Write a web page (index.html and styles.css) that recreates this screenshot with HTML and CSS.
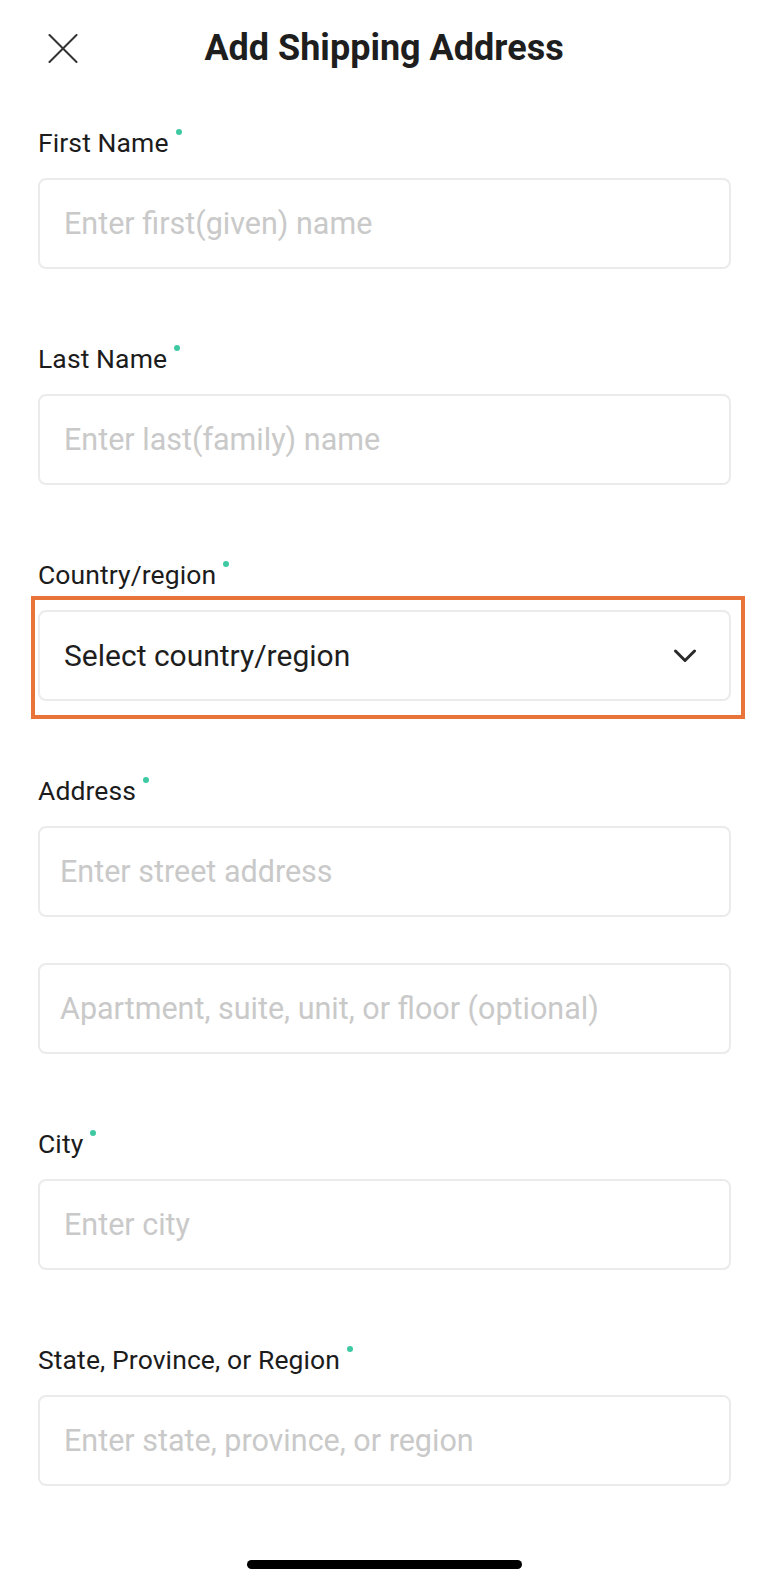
FILE: index.html
```html
<!DOCTYPE html>
<html lang="en">
<head>
  <meta charset="UTF-8" />
  <title>Add Shipping Address</title>
  <link rel="stylesheet" href="styles.css">
</head>
<body>
  <div class="screen">
    <header class="topbar">
      <button class="close-btn" aria-label="Close">
        <svg width="30" height="29" viewBox="0 0 30 29">
          <line x1="1.5" y1="1" x2="28.5" y2="28" stroke="#333" stroke-width="2" stroke-linecap="round" />
          <line x1="28.5" y1="1" x2="1.5" y2="28" stroke="#333" stroke-width="2" stroke-linecap="round" />
        </svg>
      </button>
      <h1 class="title">Add Shipping Address</h1>
      <span></span>
    </header>

    <form class="address-form">
      <div class="field">
        <div class="label required">First Name</div>
        <div class="input"><span class="placeholder">Enter first(given) name</span></div>
      </div>

      <div class="field">
        <div class="label required">Last Name</div>
        <div class="input"><span class="placeholder">Enter last(family) name</span></div>
      </div>

      <div class="field">
        <div class="label required">Country/region</div>
        <div class="select-wrap">
          <div class="input select">
            <span class="value">Select country/region</span>
            <svg class="chevron" width="24" height="14" viewBox="0 0 24 14">
              <polyline points="2.5,2 12,11.5 21.5,2" fill="none" stroke="#2a2a2a" stroke-width="3" stroke-linecap="round" stroke-linejoin="round" />
            </svg>
          </div>
          <!-- highlight box drawn over the select -->
          <div class="highlight"></div>
        </div>
      </div>

      <div class="field">
        <div class="label required">Address</div>
        <div class="input tight"><span class="placeholder">Enter street address</span></div>
        <div class="input tight second"><span class="placeholder">Apartment, suite, unit, or floor (optional)</span></div>
      </div>

      <div class="field">
        <div class="label required">City</div>
        <div class="input"><span class="placeholder">Enter city</span></div>
      </div>

      <div class="field">
        <div class="label required">State, Province, or Region</div>
        <div class="input"><span class="placeholder">Enter state, province, or region</span></div>
      </div>
    </form>

    <div class="home-indicator"></div>
  </div>
</body>
</html>
```

FILE: styles.css
```css
body {
  margin: 0;
  background: #fff;
  font-family: Roboto, "Liberation Sans", Arial, sans-serif;
  color: #1c1c1c;
}
.screen {
  width: 768px;
  min-height: 1583px;
  display: flex;
  flex-direction: column;
}
.topbar {
  height: 96px;
  display: grid;
  grid-template-columns: 1fr auto 1fr;
  align-items: center;
}
.close-btn {
  justify-self: start;
  margin-left: 48px;
  padding: 0;
  border: none;
  background: none;
  display: flex;
  cursor: pointer;
}
.title {
  margin: 0;
  font-size: 36px;
  font-weight: 700;
  color: #1e1e1e;
}
.address-form {
  padding: 32px 37px 0 38px;
  display: flex;
  flex-direction: column;
  gap: 75px;
}
.field {
  display: flex;
  flex-direction: column;
  gap: 20px;
}
.label {
  font-size: 26.5px;
  line-height: 30px;
  color: #1c1c1c;
  letter-spacing: 0.1px;
}
.required::after {
  content: "";
  display: inline-block;
  width: 6px;
  height: 6px;
  border-radius: 50%;
  background: #3fc9a2;
  margin-left: 7px;
  margin-top: 1px;
  vertical-align: top;
}
.input {
  height: 91px;
  box-sizing: border-box;
  border: 2px solid #ebebeb;
  border-radius: 8px;
  padding: 0 24px;
  display: flex;
  align-items: center;
  font-size: 30.5px;
}
.input.tight {
  padding-left: 20px;
}
.input.second {
  margin-top: 26px;
}
.placeholder {
  color: #c9c9c9;
}
.select {
  justify-content: space-between;
  padding-right: 32px;
  font-size: 30px;
}
.select .value {
  color: #1e1e1e;
}
.select-wrap {
  position: relative;
}
.highlight {
  position: absolute;
  top: -14px;
  left: -7px;
  right: -14px;
  bottom: -18px;
  border: 4px solid #e9743a;
  pointer-events: none;
}
.home-indicator {
  width: 275px;
  height: 9px;
  border-radius: 5px;
  background: #000;
  margin: 74px auto 0;
}
```
